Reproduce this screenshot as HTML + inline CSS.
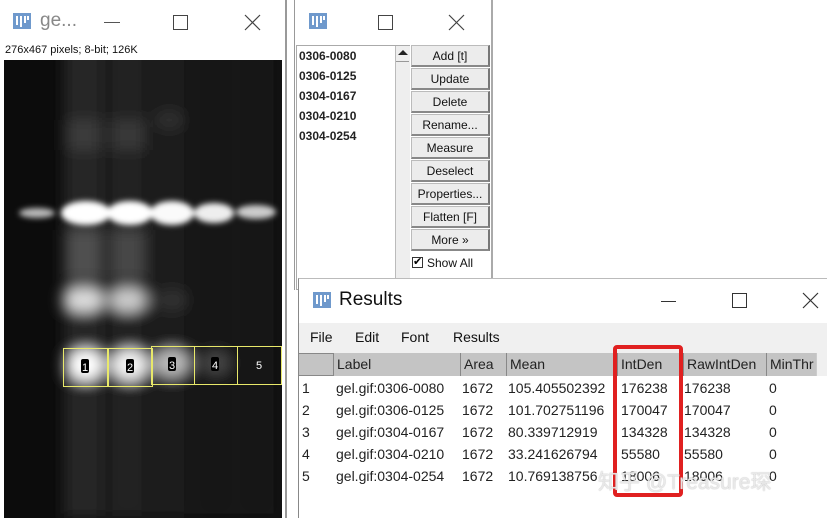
<!DOCTYPE html>
<html><head><meta charset="utf-8"><style>
*{margin:0;padding:0;box-sizing:border-box}
body{width:827px;height:518px;overflow:hidden;background:#fff;position:relative;font-family:"Liberation Sans","Noto Sans CJK SC",sans-serif;}
.abs{position:absolute}
.logo{position:absolute;width:18px;height:18px}
.btn{position:absolute;left:411px;width:79px;height:22px;background:#ececec;border:1px solid #bbb;border-right:2px solid #777;border-bottom:2px solid #888;font-size:12px;text-align:center;line-height:20px;color:#111}
.lst{position:absolute;left:299px;font-size:12px;font-weight:bold;color:#222}
.hdr{position:absolute;top:353px;height:23px;background:#c4c4c4;border-left:1px solid #888;font-size:14px;line-height:23px;padding-left:3px;color:#222}
.cell{position:absolute;font-size:14px;color:#222;line-height:22px}
</style></head><body>
<div class="abs" style="left:0;top:0;width:287px;height:518px;background:#fff;border-right:2px solid #999"></div>
<svg class="logo" style="left:13px;top:12px" viewBox="0 0 18 18"><rect x="0" y="1" width="18" height="16" fill="#6f99cc"/><rect x="3" y="4" width="2" height="9" fill="#fff"/><rect x="7" y="4" width="2" height="11" fill="#fff"/><rect x="11" y="4" width="2" height="7" fill="#fff"/><rect x="14" y="4" width="2" height="4" fill="#fff"/></svg>
<div class="abs" style="left:40px;top:10px;font-size:19px;color:#888">ge...</div>
<div class="abs" style="left:104px;top:22px;width:16px;height:1px;background:#555"></div>
<div class="abs" style="left:173px;top:15px;width:15px;height:15px;border:1px solid #444"></div>
<svg class="abs" style="left:244px;top:14px" width="17" height="17"><path d="M1 1L16 16M16 1L1 16" stroke="#444" stroke-width="1.2"/></svg>
<div class="abs" style="left:5px;top:44px;font-size:11px;color:#111">276x467 pixels; 8-bit; 126K</div>
<svg class="abs" style="left:4px;top:60px" width="278" height="458">
<defs>
<filter id="b" filterUnits="userSpaceOnUse" x="-50" y="-50" width="400" height="600"><feGaussianBlur stdDeviation="7"/></filter>
<filter id="b2" filterUnits="userSpaceOnUse" x="-50" y="-50" width="400" height="600"><feGaussianBlur stdDeviation="3"/></filter>
<linearGradient id="lg" x1="0" y1="0" x2="0" y2="1"><stop offset="0" stop-color="#fff" stop-opacity="0"/><stop offset="0.12" stop-color="#fff" stop-opacity="1"/></linearGradient>
</defs>
<rect width="278" height="458" fill="#0c0c0c"/>
<g filter="url(#b)">
<rect x="60" y="-20" width="40" height="478" fill="#282828"/>
<rect x="104" y="-20" width="40" height="478" fill="#242424"/>
<rect x="148" y="-20" width="38" height="478" fill="#1a1a1a"/>
<rect x="192" y="-20" width="38" height="478" fill="#171717"/>
<rect x="234" y="-20" width="40" height="478" fill="#131313"/>
<rect x="62" y="60" width="36" height="30" fill="#3a3a3a"/>
<rect x="106" y="60" width="36" height="30" fill="#383838"/>
<ellipse cx="165" cy="60" rx="16" ry="8" fill="#333"/>
<rect x="62" y="170" width="36" height="50" fill="#505050"/>
<rect x="106" y="170" width="36" height="50" fill="#464646"/>
<ellipse cx="80" cy="240" rx="22" ry="12" fill="#ddd"/>
<ellipse cx="124" cy="240" rx="20" ry="12" fill="#ccc"/>
<ellipse cx="168" cy="240" rx="18" ry="10" fill="#333"/>
<ellipse cx="82" cy="305" rx="20" ry="16" fill="#fff"/>
<ellipse cx="126" cy="305" rx="20" ry="16" fill="#f4f4f4"/>
<ellipse cx="168" cy="303" rx="20" ry="14" fill="#bbb"/>
<ellipse cx="212" cy="303" rx="16" ry="12" fill="#444"/>
</g>
<g filter="url(#b2)">
<ellipse cx="33" cy="153" rx="18" ry="5" fill="#bbb"/>
<ellipse cx="82" cy="153" rx="25" ry="12" fill="#fff"/>
<ellipse cx="126" cy="153" rx="23" ry="12" fill="#fff"/>
<ellipse cx="168" cy="153" rx="22" ry="12" fill="#fafafa"/>
<ellipse cx="210" cy="153" rx="20" ry="10" fill="#eee"/>
<ellipse cx="252" cy="152" rx="20" ry="7" fill="#ccc"/>
</g>
<g fill="none" stroke="#e8e86a" stroke-width="1">
<rect x="59.5" y="288.5" width="44" height="38"/>
<rect x="104.5" y="288.5" width="44" height="38"/>
<rect x="147.5" y="286.5" width="43" height="38"/>
<rect x="190.5" y="286.5" width="43" height="38"/>
<rect x="233.5" y="286.5" width="44" height="38"/>
</g>
<g font-size="11" fill="#fff" text-anchor="middle" font-family="Liberation Sans">
<rect x="77" y="299" width="8" height="14" rx="2" fill="#000"/><text x="81" y="311">1</text>
<rect x="122" y="299" width="8" height="14" rx="2" fill="#000"/><text x="126" y="311">2</text>
<rect x="164" y="297" width="8" height="14" rx="2" fill="#000"/><text x="168" y="309">3</text>
<rect x="207" y="297" width="8" height="14" rx="2" fill="#000"/><text x="211" y="309">4</text>
<text x="255" y="309">5</text>
</g>
</svg>
<div class="abs" style="left:294px;top:0;width:199px;height:290px;background:#fff;border-left:1px solid #999;border-right:2px solid #aaa"></div>
<svg class="logo" style="left:309px;top:12px" viewBox="0 0 18 18"><rect x="0" y="1" width="18" height="16" fill="#6f99cc"/><rect x="3" y="4" width="2" height="9" fill="#fff"/><rect x="7" y="4" width="2" height="11" fill="#fff"/><rect x="11" y="4" width="2" height="7" fill="#fff"/><rect x="14" y="4" width="2" height="4" fill="#fff"/></svg>
<div class="abs" style="left:378px;top:15px;width:15px;height:15px;border:1px solid #444"></div>
<svg class="abs" style="left:448px;top:14px" width="17" height="17"><path d="M1 1L16 16M16 1L1 16" stroke="#444" stroke-width="1.2"/></svg>
<div class="abs" style="left:296px;top:45px;width:114px;height:245px;border:1px solid #aaa;border-right:none"></div>
<div class="abs" style="left:395px;top:46px;width:15px;height:240px;background:#eee;border-left:1px solid #bbb"></div>
<div class="abs" style="left:398px;top:50px;width:0;height:0;border-left:5px solid transparent;border-right:5px solid transparent;border-bottom:5px solid #222"></div>
<div class="abs" style="left:396px;top:61px;width:13px;height:1px;background:#999"></div>
<div class="lst" style="top:49px">0306-0080</div>
<div class="lst" style="top:69px">0306-0125</div>
<div class="lst" style="top:89px">0304-0167</div>
<div class="lst" style="top:109px">0304-0210</div>
<div class="lst" style="top:129px">0304-0254</div>
<div class="btn" style="top:45px">Add [t]</div>
<div class="btn" style="top:68px">Update</div>
<div class="btn" style="top:91px">Delete</div>
<div class="btn" style="top:114px">Rename...</div>
<div class="btn" style="top:137px">Measure</div>
<div class="btn" style="top:160px">Deselect</div>
<div class="btn" style="top:183px">Properties...</div>
<div class="btn" style="top:206px">Flatten [F]</div>
<div class="btn" style="top:229px">More »</div>
<div class="abs" style="left:412px;top:257px;width:11px;height:11px;border:1px solid #333;font-size:11px;line-height:9px;text-align:center">✔</div>
<div class="abs" style="left:427px;top:256px;font-size:12px;color:#111">Show All</div>
<div class="abs" style="left:298px;top:278px;width:529px;height:240px;background:#fff;border-left:1px solid #888;border-top:1px solid #bbb"></div>
<svg class="logo" style="left:313px;top:291px" viewBox="0 0 18 18"><rect x="0" y="1" width="18" height="16" fill="#6f99cc"/><rect x="3" y="4" width="2" height="9" fill="#fff"/><rect x="7" y="4" width="2" height="11" fill="#fff"/><rect x="11" y="4" width="2" height="7" fill="#fff"/><rect x="14" y="4" width="2" height="4" fill="#fff"/></svg>
<div class="abs" style="left:339px;top:289px;font-size:19px;color:#111">Results</div>
<div class="abs" style="left:661px;top:301px;width:15px;height:1px;background:#333"></div>
<div class="abs" style="left:732px;top:293px;width:15px;height:15px;border:1px solid #333"></div>
<svg class="abs" style="left:802px;top:292px" width="17" height="17"><path d="M1 1L16 16M16 1L1 16" stroke="#333" stroke-width="1.2"/></svg>
<div class="abs" style="left:299px;top:323px;width:528px;height:30px;background:#f0f0f0"></div>
<div class="abs" style="left:310px;top:329px;font-size:14px;color:#111">File</div>
<div class="abs" style="left:355px;top:329px;font-size:14px;color:#111">Edit</div>
<div class="abs" style="left:401px;top:329px;font-size:14px;color:#111">Font</div>
<div class="abs" style="left:453px;top:329px;font-size:14px;color:#111">Results</div>
<div class="abs" style="left:299px;top:353px;width:528px;height:23px;background:#c4c4c4;border-top:1px solid #888;border-bottom:1px solid #888"></div>
<div class="hdr" style="left:333px;width:127px">Label</div>
<div class="hdr" style="left:460px;width:46px">Area</div>
<div class="hdr" style="left:506px;width:111px">Mean</div>
<div class="hdr" style="left:617px;width:66px">IntDen</div>
<div class="hdr" style="left:683px;width:83px">RawIntDen</div>
<div class="hdr" style="left:766px;width:50px">MinThr</div>
<div class="abs" style="left:816px;top:353px;width:11px;height:23px;background:#f0f0f0;border-left:1px solid #ccc"></div>
<div class="cell" style="left:302px;top:377px">1<br>2<br>3<br>4<br>5</div>
<div class="cell" style="left:336px;top:377px">gel.gif:0306-0080<br>gel.gif:0306-0125<br>gel.gif:0304-0167<br>gel.gif:0304-0210<br>gel.gif:0304-0254</div>
<div class="cell" style="left:462px;top:377px">1672<br>1672<br>1672<br>1672<br>1672</div>
<div class="cell" style="left:508px;top:377px">105.405502392<br>101.702751196<br>80.339712919<br>33.241626794<br>10.769138756</div>
<div class="cell" style="left:621px;top:377px">176238<br>170047<br>134328<br>55580<br>18006</div>
<div class="cell" style="left:684px;top:377px">176238<br>170047<br>134328<br>55580<br>18006</div>
<div class="cell" style="left:769px;top:377px">0<br>0<br>0<br>0<br>0</div>
<div class="abs" style="left:613px;top:345px;width:70px;height:152px;border:4px solid #e02020;border-radius:4px"></div>
<div class="abs" style="left:598px;top:466px;font-size:21px;color:rgba(255,255,255,0.75);text-shadow:0 0 1px #999">知乎 @Treasure琛</div>
</body></html>
